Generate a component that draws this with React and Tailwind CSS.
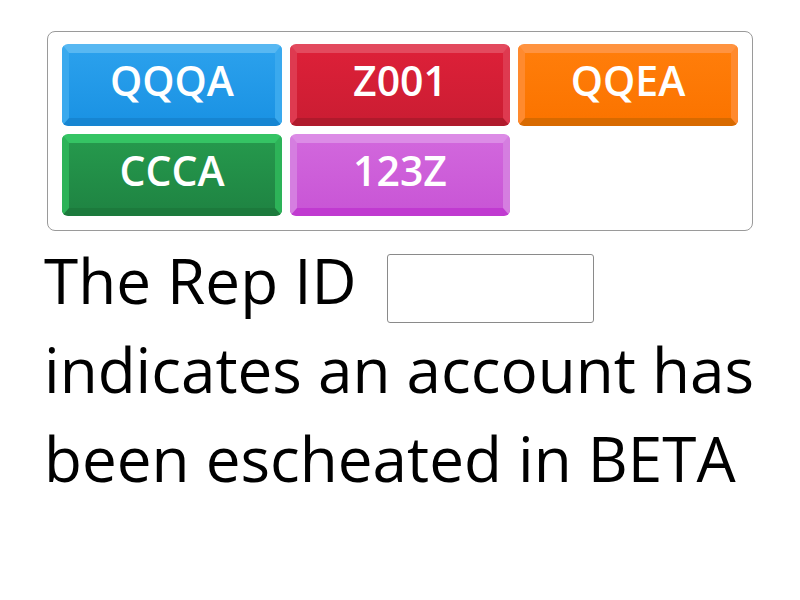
import React from "react";

const buttons = [
  {
    label: "QQQA",
    cls: "border-t-[#58b8f2] border-x-[#3aa9ee] border-b-[#1685d2] bg-gradient-to-b from-[#2aa0ec] to-[#1b93e4]",
  },
  {
    label: "Z001",
    cls: "border-t-[#e34a5e] border-x-[#de3a50] border-b-[#b01a2c] bg-gradient-to-b from-[#dc2038] to-[#cc1d33]",
  },
  {
    label: "QQEA",
    cls: "border-t-[#ff9340] border-x-[#ff8a2e] border-b-[#d86a00] bg-gradient-to-b from-[#ff7d0a] to-[#fb7400]",
  },
  {
    label: "CCCA",
    cls: "border-t-[#35c464] border-x-[#2db358] border-b-[#1c7a3c] bg-gradient-to-b from-[#25984c] to-[#1f8543]",
  },
  {
    label: "123Z",
    cls: "border-t-[#dc8ce6] border-x-[#d57ee0] border-b-[#c03ad0] bg-gradient-to-b from-[#d166dc] to-[#c956d6]",
  },
];

export default function App() {
  return (
    <div
      className="w-[800px] h-[600px] bg-white overflow-hidden"
      style={{ fontFamily: '"Open Sans", "Noto Sans", sans-serif' }}
    >
      <div className="pt-[31px] pl-[47px]">
        <div className="w-[706px] h-[200px] border border-[#9a9a9a] rounded-[8px] pt-[12px] px-[14px]">
          <div className="grid grid-cols-3 gap-x-[8px] gap-y-[8px]">
            {buttons.map((b) => (
              <div
                key={b.label}
                className={`h-[82px] rounded-[6px] border-t-[9px] border-x-[7px] border-b-[8px] flex items-center justify-center text-white font-semibold text-[41px] leading-none pb-[10px] ${b.cls}`}
              >
                {b.label}
              </div>
            ))}
          </div>
        </div>
      </div>
      <div className="pl-[44px] pr-[20px] text-[62px] leading-[89px] text-black mt-[5px]">
        The Rep ID{" "}
        <span className="inline-block align-middle w-[207px] h-[69px] border-[1.5px] border-[#8a8a8a] rounded-[3px] ml-[14px] mt-[2px]"></span>{" "}
        indicates an account has been escheated in BETA
      </div>
    </div>
  );
}
